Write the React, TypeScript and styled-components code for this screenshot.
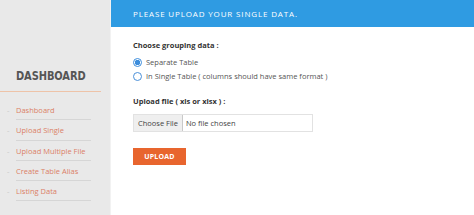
import { FC } from "react";
import styled, { createGlobalStyle } from "styled-components";

const GlobalStyle = createGlobalStyle`
  html, body {
    margin: 0;
    padding: 0;
    background: #ffffff;
  }
  body {
    font-family: "Open Sans", "Liberation Sans", sans-serif;
  }
`;

const Page = styled.div`
  display: flex;
  width: 474px;
  height: 215px;
  overflow: hidden;
`;

const Sidebar = styled.aside`
  width: 110px;
  flex-shrink: 0;
  background: #e9e9e9;
  padding-top: 68px;
  box-sizing: border-box;
`;

const Brand = styled.h1`
  margin: 0 0 0 16px;
  font-family: "DejaVu Sans Condensed", "DejaVu Sans", sans-serif;
  font-weight: bold;
  font-size: 11px;
  line-height: 15px;
  color: #555555;
  letter-spacing: -0.1px;
  transform: scaleY(1.15);
  transform-origin: left center;
`;

const BrandRule = styled.div`
  height: 1px;
  width: 101px;
  margin-top: 8px;
  background: #eec3a8;
`;

const Menu = styled.ul`
  list-style: none;
  margin: 8px 0 0;
  padding: 0;
`;

const MenuItem = styled.li`
  position: relative;
  margin-left: 16px;
  width: 75px;
  height: 20.3px;
  box-sizing: border-box;
  border-bottom: 1px solid #d6d6d6;
  font-size: 7.5px;
  line-height: 20px;
  color: #db7f67;
  white-space: nowrap;

  &::before {
    content: "-";
    position: absolute;
    left: -9px;
    color: #c8c8c8;
  }
`;

const Main = styled.main`
  flex: 1;
  border-left: 1px solid #f2f2f2;
  background: #ffffff;
`;

const Header = styled.div`
  height: 27px;
  background: #2f9be2;
  color: #ffffff;
  font-size: 8px;
  letter-spacing: 0.85px;
  line-height: 27px;
  padding-left: 22px;
`;

const Body = styled.div`
  padding: 13px 0 0 22px;
`;

const Label = styled.div`
  font-size: 7.5px;
  font-weight: 700;
  color: #333333;
  line-height: 10px;
`;

const RadioGroup = styled.div`
  display: flex;
  flex-direction: column;
  gap: 4px;
  margin: 7px 0 15px;
`;

const RadioRow = styled.label`
  display: flex;
  align-items: center;
  gap: 4px;
  font-size: 7.5px;
  color: #555555;
  line-height: 10px;
`;

const RadioDot = styled.span<{ $checked?: boolean }>`
  width: 7px;
  height: 7px;
  border-radius: 50%;
  border: 1px solid ${(p) => (p.$checked ? "#3c8ddc" : "#4a90d9")};
  background: ${(p) =>
    p.$checked ? "radial-gradient(circle, #3c8ddc 0 2.5px, #ffffff 3px)" : "#ffffff"};
  flex-shrink: 0;
`;

const FileBox = styled.div`
  display: flex;
  width: 180px;
  height: 18px;
  margin-top: 8px;
  border: 1px solid #e2e2e2;
  box-sizing: border-box;
  font-size: 7.5px;
  color: #444444;
`;

const FileButton = styled.span`
  display: flex;
  align-items: center;
  padding: 0 4px;
  background: #efefef;
  border-right: 1px solid #c9c9c9;
`;

const FileName = styled.span`
  display: flex;
  align-items: center;
  padding-left: 3px;
`;

const UploadButton = styled.button`
  display: block;
  margin-top: 16px;
  width: 53px;
  height: 17px;
  border: none;
  padding: 0;
  background: #e8652e;
  color: #ffffff;
  font-family: inherit;
  font-weight: 700;
  font-size: 7px;
  letter-spacing: 0.2px;
`;

const menuItems = [
  "Dashboard",
  "Upload Single",
  "Upload Multiple File",
  "Create Table Alias",
  "Listing Data",
];

const App: FC = () => (
  <>
    <GlobalStyle />
    <Page>
      <Sidebar>
        <Brand>DASHBOARD</Brand>
        <BrandRule />
        <Menu>
          {menuItems.map((item) => (
            <MenuItem key={item}>{item}</MenuItem>
          ))}
        </Menu>
      </Sidebar>
      <Main>
        <Header>PLEASE UPLOAD YOUR SINGLE DATA.</Header>
        <Body>
          <Label>Choose grouping data :</Label>
          <RadioGroup>
            <RadioRow>
              <RadioDot $checked />
              Separate Table
            </RadioRow>
            <RadioRow>
              <RadioDot />
              In Single Table ( columns should have same format )
            </RadioRow>
          </RadioGroup>
          <Label>Upload file ( xls or xlsx ) :</Label>
          <FileBox>
            <FileButton>Choose File</FileButton>
            <FileName>No file chosen</FileName>
          </FileBox>
          <UploadButton>UPLOAD</UploadButton>
        </Body>
      </Main>
    </Page>
  </>
);

export default App;
